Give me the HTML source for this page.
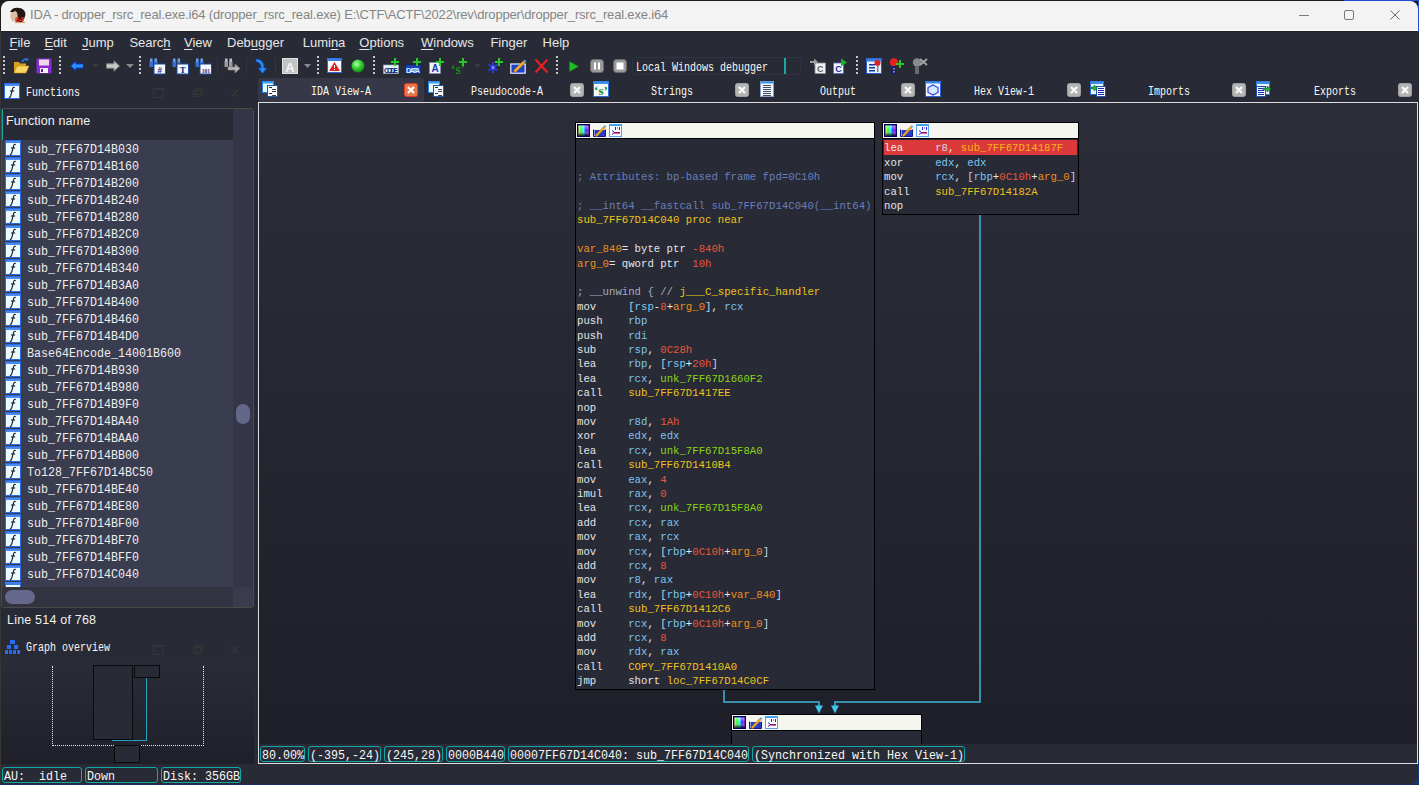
<!DOCTYPE html><html><head><meta charset="utf-8"><title>IDA</title><style>
*{margin:0;padding:0;box-sizing:border-box}
html,body{width:1419px;height:785px;overflow:hidden;background:#1c1c1f;font-family:"Liberation Sans",sans-serif}
.a{position:absolute}
svg.a{display:block;overflow:visible}
.m{font-family:"Liberation Mono",monospace;white-space:pre}
.s{font-family:"Liberation Sans",sans-serif;white-space:pre}
.sx{display:inline-block;transform-origin:0 0}
</style></head><body>
<div class="a" style="left:0px;top:0px;width:1419px;height:785px;background:#1c1c1f;"></div>
<div class="a" style="left:1344px;top:0px;width:75px;height:1px;background:#1d4ed8;"></div>
<div class="a" style="left:1418px;top:0px;width:1px;height:785px;background:#24262c;"></div>
<div class="a" style="left:1418px;top:0px;width:1px;height:32px;background:#1f4fd0;"></div>
<div class="a" style="left:1405px;top:760px;width:14px;height:25px;background:#1a3580;"></div>
<div class="a" style="left:0px;top:784px;width:1419px;height:1px;background:#1e2c60;"></div>
<div class="a" style="left:1px;top:1px;width:1417px;height:783px;background:#282a36;border-radius:8px 8px 7px 0"></div>
<div class="a" style="left:1px;top:1px;width:1417px;height:29px;background:#f3f3f3;border-radius:8px 8px 0 0"></div>
<div class="a" style="left:1px;top:30px;width:1417px;height:1px;background:#fbfbfb;"></div>
<div class="a" style="left:1px;top:31px;width:1417px;height:1px;background:#1f2029;"></div>
<div class="a" style="left:0px;top:31px;width:1px;height:753px;background:#363634;"></div>
<svg class="a" style="left:9px;top:7px;" width="17" height="16" viewBox="0 0 17 16">
<path d="M2 4c1-3 5-4 8-3 3 0 5 2 6 4 1 2 0 5-1 7l-2 3H7z" fill="#241812"/>
<ellipse cx="5" cy="9" rx="3.6" ry="5.6" fill="#dcc0a8"/>
<path d="M1 5c1-2 3-3 5-2l-1 2z" fill="#241812"/>
<path d="M6 15.5h10" stroke="#d8a070" stroke-width="1.2"/>
<text x="6" y="15" font-size="8" font-family="Liberation Sans" font-weight="bold" fill="#e83a20">64</text>
</svg>
<div class="a s" style="left:30px;top:8px;font-size:13px;line-height:1;color:#858585;letter-spacing:-0.17px">IDA - dropper_rsrc_real.exe.i64 (dropper_rsrc_real.exe) E:\CTF\ACTF\2022\rev\dropper\dropper_rsrc_real.exe.i64</div>
<div class="a" style="left:1299px;top:15px;width:10px;height:1px;background:#7a7a7a;"></div>
<div class="a" style="left:1344px;top:10px;width:10px;height:10px;border:1px solid #7a7a7a;border-radius:2px"></div>
<svg class="a" style="left:1390px;top:10px;" width="10" height="10" viewBox="0 0 10 10"><path d="M0.5 0.5L9.5 9.5M9.5 0.5L0.5 9.5" stroke="#6a6a6a" stroke-width="1"/></svg>
<div class="a s" id="mn_File" style="left:9.5px;top:36px;font-size:13px;line-height:13px;color:#e6e6e6"><u style="text-decoration:underline;text-underline-offset:1.5px;text-decoration-thickness:1px">F</u>ile</div>
<div class="a s" id="mn_Edit" style="left:44.4px;top:36px;font-size:13px;line-height:13px;color:#e6e6e6"><u style="text-decoration:underline;text-underline-offset:1.5px;text-decoration-thickness:1px">E</u>dit</div>
<div class="a s" id="mn_Jump" style="left:82px;top:36px;font-size:13px;line-height:13px;color:#e6e6e6"><u style="text-decoration:underline;text-underline-offset:1.5px;text-decoration-thickness:1px">J</u>ump</div>
<div class="a s" id="mn_Search" style="left:129.4px;top:36px;font-size:13px;line-height:13px;color:#e6e6e6">Searc<u style="text-decoration:underline;text-underline-offset:1.5px;text-decoration-thickness:1px">h</u></div>
<div class="a s" id="mn_View" style="left:184px;top:36px;font-size:13px;line-height:13px;color:#e6e6e6"><u style="text-decoration:underline;text-underline-offset:1.5px;text-decoration-thickness:1px">V</u>iew</div>
<div class="a s" id="mn_Debugger" style="left:227px;top:36px;font-size:13px;line-height:13px;color:#e6e6e6">Deb<u style="text-decoration:underline;text-underline-offset:1.5px;text-decoration-thickness:1px">u</u>gger</div>
<div class="a s" id="mn_Lumina" style="left:302.7px;top:36px;font-size:13px;line-height:13px;color:#e6e6e6">Lumi<u style="text-decoration:underline;text-underline-offset:1.5px;text-decoration-thickness:1px">n</u>a</div>
<div class="a s" id="mn_Options" style="left:359.3px;top:36px;font-size:13px;line-height:13px;color:#e6e6e6"><u style="text-decoration:underline;text-underline-offset:1.5px;text-decoration-thickness:1px">O</u>ptions</div>
<div class="a s" id="mn_Windows" style="left:421px;top:36px;font-size:13px;line-height:13px;color:#e6e6e6"><u style="text-decoration:underline;text-underline-offset:1.5px;text-decoration-thickness:1px">W</u>indows</div>
<div class="a s" id="mn_Finger" style="left:490.4px;top:36px;font-size:13px;line-height:13px;color:#e6e6e6">Finger</div>
<div class="a s" id="mn_Help" style="left:542.6px;top:36px;font-size:13px;line-height:13px;color:#e6e6e6">Help</div>
<div class="a" style="left:3px;top:56px;width:2px;height:2px;background:#c8c8c8;"></div>
<div class="a" style="left:3px;top:60px;width:2px;height:2px;background:#c8c8c8;"></div>
<div class="a" style="left:3px;top:64px;width:2px;height:2px;background:#c8c8c8;"></div>
<div class="a" style="left:3px;top:68px;width:2px;height:2px;background:#c8c8c8;"></div>
<div class="a" style="left:3px;top:72px;width:2px;height:2px;background:#c8c8c8;"></div>
<div class="a" style="left:59px;top:56px;width:2px;height:2px;background:#c8c8c8;"></div>
<div class="a" style="left:59px;top:60px;width:2px;height:2px;background:#c8c8c8;"></div>
<div class="a" style="left:59px;top:64px;width:2px;height:2px;background:#c8c8c8;"></div>
<div class="a" style="left:59px;top:68px;width:2px;height:2px;background:#c8c8c8;"></div>
<div class="a" style="left:59px;top:72px;width:2px;height:2px;background:#c8c8c8;"></div>
<div class="a" style="left:139px;top:56px;width:2px;height:2px;background:#c8c8c8;"></div>
<div class="a" style="left:139px;top:60px;width:2px;height:2px;background:#c8c8c8;"></div>
<div class="a" style="left:139px;top:64px;width:2px;height:2px;background:#c8c8c8;"></div>
<div class="a" style="left:139px;top:68px;width:2px;height:2px;background:#c8c8c8;"></div>
<div class="a" style="left:139px;top:72px;width:2px;height:2px;background:#c8c8c8;"></div>
<div class="a" style="left:317px;top:56px;width:2px;height:2px;background:#c8c8c8;"></div>
<div class="a" style="left:317px;top:60px;width:2px;height:2px;background:#c8c8c8;"></div>
<div class="a" style="left:317px;top:64px;width:2px;height:2px;background:#c8c8c8;"></div>
<div class="a" style="left:317px;top:68px;width:2px;height:2px;background:#c8c8c8;"></div>
<div class="a" style="left:317px;top:72px;width:2px;height:2px;background:#c8c8c8;"></div>
<div class="a" style="left:373px;top:56px;width:2px;height:2px;background:#c8c8c8;"></div>
<div class="a" style="left:373px;top:60px;width:2px;height:2px;background:#c8c8c8;"></div>
<div class="a" style="left:373px;top:64px;width:2px;height:2px;background:#c8c8c8;"></div>
<div class="a" style="left:373px;top:68px;width:2px;height:2px;background:#c8c8c8;"></div>
<div class="a" style="left:373px;top:72px;width:2px;height:2px;background:#c8c8c8;"></div>
<div class="a" style="left:556px;top:56px;width:2px;height:2px;background:#c8c8c8;"></div>
<div class="a" style="left:556px;top:60px;width:2px;height:2px;background:#c8c8c8;"></div>
<div class="a" style="left:556px;top:64px;width:2px;height:2px;background:#c8c8c8;"></div>
<div class="a" style="left:556px;top:68px;width:2px;height:2px;background:#c8c8c8;"></div>
<div class="a" style="left:556px;top:72px;width:2px;height:2px;background:#c8c8c8;"></div>
<div class="a" style="left:856px;top:56px;width:2px;height:2px;background:#c8c8c8;"></div>
<div class="a" style="left:856px;top:60px;width:2px;height:2px;background:#c8c8c8;"></div>
<div class="a" style="left:856px;top:64px;width:2px;height:2px;background:#c8c8c8;"></div>
<div class="a" style="left:856px;top:68px;width:2px;height:2px;background:#c8c8c8;"></div>
<div class="a" style="left:856px;top:72px;width:2px;height:2px;background:#c8c8c8;"></div>
<div class="a" style="left:217px;top:57px;width:1px;height:17px;background:#34363f;"></div>
<div class="a" style="left:246px;top:57px;width:1px;height:17px;background:#34363f;"></div>
<div class="a" style="left:275px;top:57px;width:1px;height:17px;background:#34363f;"></div>
<svg class="a" style="left:13px;top:58px;" width="17" height="16" viewBox="0 0 17 16">
<path d="M1 4h5l1 1.5h6v9H1z" fill="#d8a020"/>
<path d="M1 15l3-7h12l-3 7z" fill="#f8d860" stroke="#c89010" stroke-width="0.6"/>
<path d="M9 4c1-2.5 3-3 5-3" stroke="#2a7ae0" stroke-width="1.6" fill="none"/>
<path d="M13 0l3 1.5-2.5 2z" fill="#2a7ae0"/>
</svg>
<svg class="a" style="left:36px;top:58px;" width="16" height="16" viewBox="0 0 16 16">
<rect x="0.5" y="0.5" width="15" height="15" fill="#8a2ad8" rx="1"/>
<rect x="3" y="1.5" width="10" height="6" fill="#f0d8e8"/>
<rect x="4" y="10" width="8" height="5" fill="#f4f4f4"/>
<rect x="5" y="11" width="2" height="3" fill="#6a1ab0"/>
</svg>
<svg class="a" style="left:70px;top:60px;" width="14" height="12" viewBox="0 0 14 12"><path d="M0.5 6L6 0.8V3.8H13.5V8.2H6V11.2Z" fill="#2a8cff" stroke="#0a2aa0" stroke-width="1"/></svg>
<svg class="a" style="left:92px;top:64px;" width="7" height="4" viewBox="0 0 7 4"><path d="M0 0h7l-3.5 4z" fill="#3a3a3a"/></svg>
<svg class="a" style="left:106px;top:60px;" width="14" height="12" viewBox="0 0 14 12"><path d="M13.5 6L8 0.8V3.8H0.5V8.2H8V11.2Z" fill="#c8c8c8" stroke="#808080" stroke-width="1"/></svg>
<svg class="a" style="left:126px;top:64px;" width="8" height="4" viewBox="0 0 8 4"><path d="M0 0h8l-4 4z" fill="#8a8a8a"/></svg>
<svg class="a" style="left:149px;top:58px;" width="17" height="16" viewBox="0 0 17 16">
<rect x="0.5" y="3" width="3.5" height="6" fill="#3a70d0"/><rect x="5" y="3" width="3.5" height="6" fill="#3a70d0"/>
<rect x="1" y="0.5" width="2.5" height="3" fill="#6aa0f0"/><rect x="5.5" y="0.5" width="2.5" height="3" fill="#6aa0f0"/>
<rect x="5" y="6" width="11.5" height="10" fill="#f4f8ff" stroke="#1a4aa0" stroke-width="1"/>
<text x="10.8" y="14.5" font-size="9" text-anchor="middle" font-family="Liberation Serif" font-weight="bold" fill="#0a2a80">#</text>
</svg>
<svg class="a" style="left:172px;top:58px;" width="17" height="16" viewBox="0 0 17 16">
<rect x="0.5" y="3" width="3.5" height="6" fill="#3a70d0"/><rect x="5" y="3" width="3.5" height="6" fill="#3a70d0"/>
<rect x="1" y="0.5" width="2.5" height="3" fill="#6aa0f0"/><rect x="5.5" y="0.5" width="2.5" height="3" fill="#6aa0f0"/>
<rect x="5" y="6" width="11.5" height="10" fill="#f4f8ff" stroke="#1a4aa0" stroke-width="1"/>
<text x="10.8" y="14.5" font-size="9" text-anchor="middle" font-family="Liberation Serif" font-weight="bold" fill="#0a2a80">T</text>
</svg>
<svg class="a" style="left:195px;top:58px;" width="17" height="16" viewBox="0 0 17 16">
<rect x="0.5" y="3" width="3.5" height="6" fill="#3a70d0"/><rect x="5" y="3" width="3.5" height="6" fill="#3a70d0"/>
<rect x="1" y="0.5" width="2.5" height="3" fill="#6aa0f0"/><rect x="5.5" y="0.5" width="2.5" height="3" fill="#6aa0f0"/>
<rect x="5" y="6" width="11.5" height="10" fill="#f4f8ff" stroke="#1a4aa0" stroke-width="1"/>
<text x="10.8" y="14.5" font-size="5.5" text-anchor="middle" font-family="Liberation Serif" font-weight="bold" fill="#0a2a80">101</text>
</svg>
<svg class="a" style="left:224px;top:58px;" width="17" height="16" viewBox="0 0 17 16">
<rect x="0.5" y="3" width="3.5" height="6" fill="#9a9a9a"/><rect x="5" y="3" width="3.5" height="6" fill="#9a9a9a"/>
<rect x="1" y="0.5" width="2.5" height="3" fill="#c0c0c0"/><rect x="5.5" y="0.5" width="2.5" height="3" fill="#c0c0c0"/>
<path d="M4 9h7V6l5 4.5-5 4.5V12H4z" fill="#b8b8b8" stroke="#808080" stroke-width="0.7"/>
</svg>
<svg class="a" style="left:255px;top:58px;" width="13" height="16" viewBox="0 0 13 16"><path d="M1 1c5 0 8 3 8 8v1h3l-4.5 5.5L3 10h3V9c0-3-2-5-5-5z" fill="#2a90f0" stroke="#1040b0" stroke-width="0.8"/></svg>
<svg class="a" style="left:282px;top:58px;" width="16" height="16" viewBox="0 0 16 16"><rect x="0.5" y="0.5" width="15" height="15" fill="#c4c4c4" stroke="#e0e0e0"/><text x="8" y="13.5" font-size="13" text-anchor="middle" font-family="Liberation Sans" font-weight="bold" fill="#f4f4f4">A</text></svg>
<svg class="a" style="left:304px;top:64px;" width="7" height="4" viewBox="0 0 7 4"><path d="M0 0h7l-3.5 4z" fill="#8a8a8a"/></svg>
<svg class="a" style="left:327px;top:58px;" width="15" height="15" viewBox="0 0 15 15"><rect x="0.5" y="0.5" width="14" height="14" fill="#f8fcff" stroke="#2a6ad8"/><rect x="0.5" y="0.5" width="14" height="2.5" fill="#3a80e8"/><path d="M7.5 4L13 13H2z" fill="#e02020"/><rect x="7" y="7" width="1" height="3" fill="#fff"/><rect x="7" y="11" width="1" height="1" fill="#fff"/></svg>
<svg class="a" style="left:351px;top:59px;" width="14" height="14" viewBox="0 0 14 14"><defs><radialGradient id="gg" cx="0.4" cy="0.35" r="0.7"><stop offset="0" stop-color="#b8ffb0"/><stop offset="0.5" stop-color="#30d030"/><stop offset="1" stop-color="#108010"/></radialGradient></defs><circle cx="7" cy="7" r="6.5" fill="url(#gg)"/></svg>
<svg class="a" style="left:383px;top:62px;" width="16" height="12" viewBox="0 0 16 12"><rect x="0.5" y="3" width="15" height="8.5" fill="#e8f0f8" stroke="#a0b0c0" stroke-width="0.6"/><text x="8" y="10.5" font-size="7" text-anchor="middle" font-family="Liberation Sans" font-weight="bold" fill="#0a2a80" textLength="14">CODE</text></svg>
<div class="a" style="left:394px;top:58px;width:2px;height:8px;background:#28c828;"></div>
<div class="a" style="left:391px;top:61px;width:8px;height:2px;background:#28c828;"></div>
<svg class="a" style="left:405px;top:62px;" width="16" height="12" viewBox="0 0 16 12"><rect x="0.5" y="3" width="15" height="8.5" fill="#1a40c0" stroke="#0a2080" stroke-width="0.6"/><text x="8" y="10.5" font-size="7" text-anchor="middle" font-family="Liberation Sans" font-weight="bold" fill="#e0f0ff" textLength="14">DATA</text></svg>
<div class="a" style="left:416px;top:58px;width:2px;height:8px;background:#28c828;"></div>
<div class="a" style="left:413px;top:61px;width:8px;height:2px;background:#28c828;"></div>
<svg class="a" style="left:429px;top:62px;" width="12" height="12" viewBox="0 0 12 12"><rect x="0.5" y="0.5" width="11" height="11" fill="#f0f4fc" stroke="#8090c0" stroke-width="0.6"/><text x="6" y="10" font-size="10" text-anchor="middle" font-family="Liberation Sans" font-weight="bold" fill="#1a40b0">A</text></svg>
<div class="a" style="left:439px;top:58px;width:2px;height:8px;background:#28c828;"></div>
<div class="a" style="left:436px;top:61px;width:8px;height:2px;background:#28c828;"></div>
<svg class="a" style="left:451px;top:62px;" width="15" height="12" viewBox="0 0 15 12"><text x="0" y="11.5" font-size="14" font-family="Liberation Serif" font-weight="bold" fill="#1a8a1a" textLength="14" lengthAdjust="spacingAndGlyphs">&#8216;s&#8217;</text></svg>
<div class="a" style="left:462px;top:58px;width:2px;height:8px;background:#28c828;"></div>
<div class="a" style="left:459px;top:61px;width:8px;height:2px;background:#28c828;"></div>
<svg class="a" style="left:474px;top:64px;" width="7" height="4" viewBox="0 0 7 4"><path d="M0 0h7l-3.5 4z" fill="#3a3a3a"/></svg>
<svg class="a" style="left:487px;top:60px;" width="14" height="14" viewBox="0 0 14 14"><path d="M6 2V13M1.5 4.5L10.5 10.5M10.5 4.5L1.5 10.5" stroke="#2a3ae8" stroke-width="2"/><circle cx="6" cy="7.5" r="1.5" fill="#8090ff"/></svg>
<div class="a" style="left:498px;top:58px;width:2px;height:8px;background:#28c828;"></div>
<div class="a" style="left:495px;top:61px;width:8px;height:2px;background:#28c828;"></div>
<svg class="a" style="left:510px;top:58px;" width="16" height="16" viewBox="0 0 16 16"><rect x="0.8" y="6" width="14.4" height="9.2" fill="#2040d0" stroke="#e8f0ff" stroke-width="1.2"/><path d="M4 12L13 3l2 2-9 9H4z" fill="#f0b020" stroke="#a06010" stroke-width="0.5"/><path d="M13 3l1.5-1.5 2 2L15 5z" fill="#60a0e0"/></svg>
<svg class="a" style="left:534px;top:58px;" width="15" height="16" viewBox="0 0 15 16"><path d="M1.5 1.5L13.5 14.5M13.5 1.5L1.5 14.5" stroke="#e82020" stroke-width="2.2"/></svg>
<svg class="a" style="left:569px;top:61px;" width="10" height="11" viewBox="0 0 10 11"><path d="M0.5 0.5L9.5 5.5L0.5 10.5z" fill="#20c020" stroke="#108010" stroke-width="0.6"/></svg>
<svg class="a" style="left:590px;top:59px;" width="14" height="14" viewBox="0 0 14 14"><rect x="0.5" y="0.5" width="13" height="13" rx="3" fill="#9a9a9a" stroke="#6a6a6a"/><rect x="4" y="3.5" width="2" height="7" fill="#fff"/><rect x="8" y="3.5" width="2" height="7" fill="#fff"/></svg>
<svg class="a" style="left:613px;top:59px;" width="14" height="14" viewBox="0 0 14 14"><rect x="0.5" y="0.5" width="13" height="13" rx="3" fill="#9a9a9a" stroke="#6a6a6a"/><rect x="3.5" y="3.5" width="7" height="7" fill="#fff"/></svg>
<div class="a" style="left:632px;top:57px;width:169px;height:18px;border:1px solid #31333f;border-radius:3px;background:#282a36"></div>
<div class="a m" style="left:636px;top:62px;font-size:12.5px;line-height:1;color:#f8f8f4;"><span class="sx" style="transform:scaleX(0.8000)">Local Windows debugger</span></div>
<div class="a" style="left:784px;top:58px;width:2px;height:16px;background:#18a8a8;"></div>
<svg class="a" style="left:810px;top:58px;" width="16" height="16" viewBox="0 0 16 16"><rect x="5" y="5" width="10.5" height="10.5" fill="#f0f0f0" stroke="#909090" stroke-width="0.8"/><text x="10.3" y="14" font-size="9" text-anchor="middle" font-family="Liberation Sans" font-weight="bold" fill="#606060">C</text><path d="M0 3h4V0.5l4 3.5-4 3.5V5H0z" fill="#a0a0a0"/></svg>
<svg class="a" style="left:833px;top:58px;" width="15" height="16" viewBox="0 0 15 16"><rect x="0.5" y="5" width="10" height="10.5" fill="#f0f4ff" stroke="#5070c0" stroke-width="0.8"/><text x="5.5" y="14" font-size="9" text-anchor="middle" font-family="Liberation Sans" font-weight="bold" fill="#1a2a90">C</text><path d="M8 0.5l6 4-6 4z" fill="#20b020"/></svg>
<svg class="a" style="left:866px;top:58px;" width="16" height="16" viewBox="0 0 16 16"><rect x="0.5" y="0.5" width="15" height="15" fill="#e8f0ff" stroke="#2a5ad0"/><rect x="0.5" y="0.5" width="15" height="3" fill="#3a7ae0"/><rect x="3" y="6" width="6" height="1.5" fill="#1a3a9a"/><rect x="3" y="9" width="6" height="1.5" fill="#1a3a9a"/><rect x="3" y="12" width="6" height="1.5" fill="#1a3a9a"/><circle cx="11.5" cy="5" r="3" fill="#e02020"/><rect x="11" y="7" width="1.5" height="7" fill="#808080"/></svg>
<svg class="a" style="left:889px;top:58px;" width="16" height="16" viewBox="0 0 16 16"><circle cx="5" cy="4.5" r="4.2" fill="#e82020"/><rect x="3" y="8" width="4" height="8" fill="#1a1a80"/><rect x="4.2" y="10" width="1.6" height="1.6" fill="#a0a0a0"/><rect x="4.2" y="13" width="1.6" height="1.6" fill="#a0a0a0"/></svg>
<div class="a" style="left:899px;top:60px;width:2px;height:8px;background:#28c828;"></div>
<div class="a" style="left:896px;top:63px;width:8px;height:2px;background:#28c828;"></div>
<svg class="a" style="left:912px;top:58px;" width="17" height="16" viewBox="0 0 17 16"><circle cx="5" cy="4.5" r="4.2" fill="#8a8a8a"/><rect x="3" y="8" width="4" height="8" fill="#6a6a6a"/><path d="M8 1l7 6M15 1L8 7" stroke="#a8a8a8" stroke-width="1.8"/></svg>
<div class="a" style="left:258px;top:78px;width:166px;height:24px;background:#363848;border-radius:3px 3px 0 0"></div>
<svg class="a" style="left:262px;top:81px;" width="16" height="16" viewBox="0 0 16 16">
<rect x="0.5" y="0.5" width="11" height="11" fill="#e8faff" stroke="#2a80e8"/><rect x="0.5" y="0.5" width="11" height="2" fill="#3aa0f0"/>
<rect x="5.5" y="4.5" width="10" height="11" fill="#f4f8ff" stroke="#1a5aa8"/>
<rect x="7" y="6" width="3" height="1" fill="#303030"/><rect x="10" y="8" width="4" height="1" fill="#404040"/><rect x="10" y="10" width="4" height="1" fill="#404040"/><rect x="7" y="12" width="3" height="1" fill="#303030"/><rect x="10" y="14" width="4" height="1" fill="#404040"/></svg>
<svg class="a" style="left:404px;top:83px;" width="14" height="14" viewBox="0 0 14 14"><rect x="0.5" y="0.5" width="13" height="13" rx="2" fill="#e4784a" stroke="#e43c20" stroke-width="1"/><path d="M4 4L10 10M10 4L4 10" stroke="#fff" stroke-width="2.2"/></svg>
<div class="a m" style="left:310.8px;top:86px;font-size:12.5px;line-height:1;color:#f8f8f4;"><span class="sx" style="transform:scaleX(0.8000)">IDA View-A</span></div>
<svg class="a" style="left:428px;top:81px;" width="16" height="16" viewBox="0 0 16 16">
<rect x="0.5" y="0.5" width="11" height="11" fill="#e8faff" stroke="#2a80e8"/><rect x="0.5" y="0.5" width="11" height="2" fill="#3aa0f0"/>
<rect x="5.5" y="4.5" width="10" height="11" fill="#f4f8ff" stroke="#1a5aa8"/>
<rect x="7" y="6" width="3" height="1" fill="#303030"/><rect x="10" y="8" width="4" height="1" fill="#404040"/><rect x="10" y="10" width="4" height="1" fill="#404040"/><rect x="7" y="12" width="3" height="1" fill="#303030"/><rect x="10" y="14" width="4" height="1" fill="#404040"/></svg>
<svg class="a" style="left:570px;top:83px;" width="14" height="14" viewBox="0 0 14 14"><rect x="0.5" y="0.5" width="13" height="13" rx="2" fill="#b4b4b4" stroke="#a0a0a0" stroke-width="1"/><path d="M4 4L10 10M10 4L4 10" stroke="#fafafa" stroke-width="2.2"/></svg>
<div class="a m" style="left:470.5px;top:86px;font-size:12.5px;line-height:1;color:#f8f8f4;"><span class="sx" style="transform:scaleX(0.8000)">Pseudocode-A</span></div>
<svg class="a" style="left:593px;top:81px;" width="16" height="16" viewBox="0 0 16 16"><rect x="0.5" y="0.5" width="15" height="15" fill="#f4fcff" stroke="#2a70d8"/><rect x="0.5" y="0.5" width="15" height="2.5" fill="#3a90e8"/><text x="8" y="13.5" font-size="13" text-anchor="middle" font-family="Liberation Serif" font-weight="bold" fill="#1a8a1a" textLength="14" lengthAdjust="spacingAndGlyphs">&#8216;s&#8217;</text></svg>
<svg class="a" style="left:735px;top:83px;" width="14" height="14" viewBox="0 0 14 14"><rect x="0.5" y="0.5" width="13" height="13" rx="2" fill="#b4b4b4" stroke="#a0a0a0" stroke-width="1"/><path d="M4 4L10 10M10 4L4 10" stroke="#fafafa" stroke-width="2.2"/></svg>
<div class="a m" style="left:651.2px;top:86px;font-size:12.5px;line-height:1;color:#f8f8f4;"><span class="sx" style="transform:scaleX(0.8000)">Strings</span></div>
<svg class="a" style="left:759px;top:81px;" width="16" height="16" viewBox="0 0 16 16"><rect x="1.5" y="0.5" width="13" height="15" fill="#f4f8ff" stroke="#8aa0c8"/><rect x="1.5" y="0.5" width="13" height="2" fill="#3a90e8"/><rect x="4" y="4" width="8" height="1" fill="#404a60"/><rect x="4" y="6" width="8" height="1" fill="#404a60"/><rect x="4" y="8" width="8" height="1" fill="#404a60"/><rect x="4" y="10" width="8" height="1" fill="#404a60"/><rect x="4" y="12" width="8" height="1" fill="#404a60"/><rect x="4" y="14" width="8" height="1" fill="#404a60"/></svg>
<svg class="a" style="left:901px;top:83px;" width="14" height="14" viewBox="0 0 14 14"><rect x="0.5" y="0.5" width="13" height="13" rx="2" fill="#b4b4b4" stroke="#a0a0a0" stroke-width="1"/><path d="M4 4L10 10M10 4L4 10" stroke="#fafafa" stroke-width="2.2"/></svg>
<div class="a m" style="left:819.8px;top:86px;font-size:12.5px;line-height:1;color:#f8f8f4;"><span class="sx" style="transform:scaleX(0.8000)">Output</span></div>
<svg class="a" style="left:925px;top:81px;" width="16" height="16" viewBox="0 0 16 16"><rect x="0.5" y="0.5" width="15" height="15" fill="#f0f4ff" stroke="#2a60d8"/><rect x="0.5" y="0.5" width="15" height="2" fill="#3a90e8"/><path d="M8 4l5 2.5v5L8 14l-5-2.5v-5z" fill="#d8e8ff" stroke="#2a40e0" stroke-width="1.2"/></svg>
<svg class="a" style="left:1067px;top:83px;" width="14" height="14" viewBox="0 0 14 14"><rect x="0.5" y="0.5" width="13" height="13" rx="2" fill="#b4b4b4" stroke="#a0a0a0" stroke-width="1"/><path d="M4 4L10 10M10 4L4 10" stroke="#fafafa" stroke-width="2.2"/></svg>
<div class="a m" style="left:973.5px;top:86px;font-size:12.5px;line-height:1;color:#f8f8f4;"><span class="sx" style="transform:scaleX(0.8000)">Hex View-1</span></div>
<svg class="a" style="left:1090px;top:81px;" width="16" height="16" viewBox="0 0 16 16"><rect x="0.5" y="0.5" width="13" height="13" fill="#e8f4ff" stroke="#2a70d8"/><rect x="0.5" y="0.5" width="13" height="2.5" fill="#3a90e8"/><rect x="6.5" y="5.5" width="9" height="10" fill="#f4f8ff" stroke="#1a50b0"/><rect x="8" y="7" width="6" height="1" fill="#1a2ab0"/><rect x="8" y="9" width="6" height="1" fill="#1a2ab0"/><rect x="8" y="11" width="6" height="1" fill="#1a2ab0"/><rect x="8" y="13" width="6" height="1" fill="#1a2ab0"/><path d="M1 6h3V4l3.5 3L4 10V8H1z" fill="#20b040" stroke="#106020" stroke-width="0.5"/></svg>
<svg class="a" style="left:1232px;top:83px;" width="14" height="14" viewBox="0 0 14 14"><rect x="0.5" y="0.5" width="13" height="13" rx="2" fill="#b4b4b4" stroke="#a0a0a0" stroke-width="1"/><path d="M4 4L10 10M10 4L4 10" stroke="#fafafa" stroke-width="2.2"/></svg>
<div class="a m" style="left:1148.2px;top:86px;font-size:12.5px;line-height:1;color:#f8f8f4;"><span class="sx" style="transform:scaleX(0.8000)">Imports</span></div>
<svg class="a" style="left:1256px;top:81px;" width="16" height="16" viewBox="0 0 16 16"><rect x="0.5" y="0.5" width="13" height="13" fill="#e8f4ff" stroke="#2a70d8"/><rect x="0.5" y="0.5" width="13" height="2.5" fill="#3a90e8"/><rect x="0.5" y="5.5" width="9" height="10" fill="#f4f8ff" stroke="#1a50b0"/><rect x="2" y="7" width="6" height="1" fill="#1a2ab0"/><rect x="2" y="9" width="6" height="1" fill="#1a2ab0"/><rect x="2" y="11" width="6" height="1" fill="#1a2ab0"/><rect x="2" y="13" width="6" height="1" fill="#1a2ab0"/><path d="M7 7h4V5l4 3-4 3V9H7z" fill="#20b040" stroke="#106020" stroke-width="0.5"/></svg>
<svg class="a" style="left:1398px;top:83px;" width="14" height="14" viewBox="0 0 14 14"><rect x="0.5" y="0.5" width="13" height="13" rx="2" fill="#b4b4b4" stroke="#a0a0a0" stroke-width="1"/><path d="M4 4L10 10M10 4L4 10" stroke="#fafafa" stroke-width="2.2"/></svg>
<div class="a m" style="left:1313.9px;top:86px;font-size:12.5px;line-height:1;color:#f8f8f4;"><span class="sx" style="transform:scaleX(0.8000)">Exports</span></div>
<svg class="a" style="left:4px;top:83px;" width="16" height="16" viewBox="0 0 16 16"><rect x="0.5" y="0.5" width="15" height="15" fill="#eafaff" stroke="#2a6ae0"/><rect x="1" y="1" width="14" height="2" fill="#4a8af4"/><path d="M10.8 4.6c-0.6-0.5-1.6-0.4-2 0.6L6.6 13.4c-0.3 0.9-1 1.1-1.7 0.8" fill="none" stroke="#141414" stroke-width="1.1"/><path d="M6 8h4.2" stroke="#141414" stroke-width="1"/></svg>
<div class="a m" style="left:26px;top:87px;font-size:12.5px;line-height:1;color:#f8f8f4;"><span class="sx" style="transform:scaleX(0.8000)">Functions</span></div>
<div class="a" style="left:153px;top:88px;width:11px;height:10px;border:1px solid #353536;border-top-width:2px"></div>
<div class="a" style="left:193px;top:90px;width:8px;height:7px;border:1px solid #353536"></div>
<div class="a" style="left:195px;top:88px;width:8px;height:7px;border:1px solid #353536"></div>
<svg class="a" style="left:230px;top:88px;" width="10" height="10" viewBox="0 0 10 10"><path d="M1 1L9 9M9 1L1 9" stroke="#353536" stroke-width="1.5"/></svg>
<div class="a" style="left:1px;top:108px;width:253px;height:500px;border:1px solid #4a4a48;border-radius:3px;background:#282a36"></div>
<div class="a" style="left:2px;top:140px;width:231px;height:447px;background:#3a3c4f;"></div>
<div class="a" style="left:233px;top:109px;width:20px;height:478px;background:#343647;"></div>
<div class="a" style="left:2px;top:587px;width:231px;height:20px;background:#313340;"></div>
<div class="a" style="left:233px;top:587px;width:20px;height:20px;background:#3a3c4e;"></div>
<div class="a" style="left:2px;top:109px;width:1px;height:31px;background:#16a8a0;"></div>
<div class="a s" style="left:6px;top:115px;font-size:12.5px;line-height:13px;color:#f0f0f0;letter-spacing:0.12px">Function name</div>
<svg class="a" style="left:5px;top:140px;" width="16" height="16" viewBox="0 0 16 16"><rect x="0.5" y="0.5" width="15" height="15" fill="#eafaff" stroke="#2a6ae0"/><rect x="1" y="1" width="14" height="2" fill="#4a8af4"/><path d="M10.8 4.6c-0.6-0.5-1.6-0.4-2 0.6L6.6 13.4c-0.3 0.9-1 1.1-1.7 0.8" fill="none" stroke="#141414" stroke-width="1.1"/><path d="M6 8h4.2" stroke="#141414" stroke-width="1"/></svg>
<div class="a m" style="left:27px;top:144px;font-size:12.5px;line-height:1;color:#eeeeee;"><span class="sx" style="transform:scaleX(0.9333)">sub_7FF67D14B030</span></div>
<svg class="a" style="left:5px;top:157px;" width="16" height="16" viewBox="0 0 16 16"><rect x="0.5" y="0.5" width="15" height="15" fill="#eafaff" stroke="#2a6ae0"/><rect x="1" y="1" width="14" height="2" fill="#4a8af4"/><path d="M10.8 4.6c-0.6-0.5-1.6-0.4-2 0.6L6.6 13.4c-0.3 0.9-1 1.1-1.7 0.8" fill="none" stroke="#141414" stroke-width="1.1"/><path d="M6 8h4.2" stroke="#141414" stroke-width="1"/></svg>
<div class="a m" style="left:27px;top:161px;font-size:12.5px;line-height:1;color:#eeeeee;"><span class="sx" style="transform:scaleX(0.9333)">sub_7FF67D14B160</span></div>
<svg class="a" style="left:5px;top:174px;" width="16" height="16" viewBox="0 0 16 16"><rect x="0.5" y="0.5" width="15" height="15" fill="#eafaff" stroke="#2a6ae0"/><rect x="1" y="1" width="14" height="2" fill="#4a8af4"/><path d="M10.8 4.6c-0.6-0.5-1.6-0.4-2 0.6L6.6 13.4c-0.3 0.9-1 1.1-1.7 0.8" fill="none" stroke="#141414" stroke-width="1.1"/><path d="M6 8h4.2" stroke="#141414" stroke-width="1"/></svg>
<div class="a m" style="left:27px;top:178px;font-size:12.5px;line-height:1;color:#eeeeee;"><span class="sx" style="transform:scaleX(0.9333)">sub_7FF67D14B200</span></div>
<svg class="a" style="left:5px;top:191px;" width="16" height="16" viewBox="0 0 16 16"><rect x="0.5" y="0.5" width="15" height="15" fill="#eafaff" stroke="#2a6ae0"/><rect x="1" y="1" width="14" height="2" fill="#4a8af4"/><path d="M10.8 4.6c-0.6-0.5-1.6-0.4-2 0.6L6.6 13.4c-0.3 0.9-1 1.1-1.7 0.8" fill="none" stroke="#141414" stroke-width="1.1"/><path d="M6 8h4.2" stroke="#141414" stroke-width="1"/></svg>
<div class="a m" style="left:27px;top:195px;font-size:12.5px;line-height:1;color:#eeeeee;"><span class="sx" style="transform:scaleX(0.9333)">sub_7FF67D14B240</span></div>
<svg class="a" style="left:5px;top:208px;" width="16" height="16" viewBox="0 0 16 16"><rect x="0.5" y="0.5" width="15" height="15" fill="#eafaff" stroke="#2a6ae0"/><rect x="1" y="1" width="14" height="2" fill="#4a8af4"/><path d="M10.8 4.6c-0.6-0.5-1.6-0.4-2 0.6L6.6 13.4c-0.3 0.9-1 1.1-1.7 0.8" fill="none" stroke="#141414" stroke-width="1.1"/><path d="M6 8h4.2" stroke="#141414" stroke-width="1"/></svg>
<div class="a m" style="left:27px;top:212px;font-size:12.5px;line-height:1;color:#eeeeee;"><span class="sx" style="transform:scaleX(0.9333)">sub_7FF67D14B280</span></div>
<svg class="a" style="left:5px;top:225px;" width="16" height="16" viewBox="0 0 16 16"><rect x="0.5" y="0.5" width="15" height="15" fill="#eafaff" stroke="#2a6ae0"/><rect x="1" y="1" width="14" height="2" fill="#4a8af4"/><path d="M10.8 4.6c-0.6-0.5-1.6-0.4-2 0.6L6.6 13.4c-0.3 0.9-1 1.1-1.7 0.8" fill="none" stroke="#141414" stroke-width="1.1"/><path d="M6 8h4.2" stroke="#141414" stroke-width="1"/></svg>
<div class="a m" style="left:27px;top:229px;font-size:12.5px;line-height:1;color:#eeeeee;"><span class="sx" style="transform:scaleX(0.9333)">sub_7FF67D14B2C0</span></div>
<svg class="a" style="left:5px;top:242px;" width="16" height="16" viewBox="0 0 16 16"><rect x="0.5" y="0.5" width="15" height="15" fill="#eafaff" stroke="#2a6ae0"/><rect x="1" y="1" width="14" height="2" fill="#4a8af4"/><path d="M10.8 4.6c-0.6-0.5-1.6-0.4-2 0.6L6.6 13.4c-0.3 0.9-1 1.1-1.7 0.8" fill="none" stroke="#141414" stroke-width="1.1"/><path d="M6 8h4.2" stroke="#141414" stroke-width="1"/></svg>
<div class="a m" style="left:27px;top:246px;font-size:12.5px;line-height:1;color:#eeeeee;"><span class="sx" style="transform:scaleX(0.9333)">sub_7FF67D14B300</span></div>
<svg class="a" style="left:5px;top:259px;" width="16" height="16" viewBox="0 0 16 16"><rect x="0.5" y="0.5" width="15" height="15" fill="#eafaff" stroke="#2a6ae0"/><rect x="1" y="1" width="14" height="2" fill="#4a8af4"/><path d="M10.8 4.6c-0.6-0.5-1.6-0.4-2 0.6L6.6 13.4c-0.3 0.9-1 1.1-1.7 0.8" fill="none" stroke="#141414" stroke-width="1.1"/><path d="M6 8h4.2" stroke="#141414" stroke-width="1"/></svg>
<div class="a m" style="left:27px;top:263px;font-size:12.5px;line-height:1;color:#eeeeee;"><span class="sx" style="transform:scaleX(0.9333)">sub_7FF67D14B340</span></div>
<svg class="a" style="left:5px;top:276px;" width="16" height="16" viewBox="0 0 16 16"><rect x="0.5" y="0.5" width="15" height="15" fill="#eafaff" stroke="#2a6ae0"/><rect x="1" y="1" width="14" height="2" fill="#4a8af4"/><path d="M10.8 4.6c-0.6-0.5-1.6-0.4-2 0.6L6.6 13.4c-0.3 0.9-1 1.1-1.7 0.8" fill="none" stroke="#141414" stroke-width="1.1"/><path d="M6 8h4.2" stroke="#141414" stroke-width="1"/></svg>
<div class="a m" style="left:27px;top:280px;font-size:12.5px;line-height:1;color:#eeeeee;"><span class="sx" style="transform:scaleX(0.9333)">sub_7FF67D14B3A0</span></div>
<svg class="a" style="left:5px;top:293px;" width="16" height="16" viewBox="0 0 16 16"><rect x="0.5" y="0.5" width="15" height="15" fill="#eafaff" stroke="#2a6ae0"/><rect x="1" y="1" width="14" height="2" fill="#4a8af4"/><path d="M10.8 4.6c-0.6-0.5-1.6-0.4-2 0.6L6.6 13.4c-0.3 0.9-1 1.1-1.7 0.8" fill="none" stroke="#141414" stroke-width="1.1"/><path d="M6 8h4.2" stroke="#141414" stroke-width="1"/></svg>
<div class="a m" style="left:27px;top:297px;font-size:12.5px;line-height:1;color:#eeeeee;"><span class="sx" style="transform:scaleX(0.9333)">sub_7FF67D14B400</span></div>
<svg class="a" style="left:5px;top:310px;" width="16" height="16" viewBox="0 0 16 16"><rect x="0.5" y="0.5" width="15" height="15" fill="#eafaff" stroke="#2a6ae0"/><rect x="1" y="1" width="14" height="2" fill="#4a8af4"/><path d="M10.8 4.6c-0.6-0.5-1.6-0.4-2 0.6L6.6 13.4c-0.3 0.9-1 1.1-1.7 0.8" fill="none" stroke="#141414" stroke-width="1.1"/><path d="M6 8h4.2" stroke="#141414" stroke-width="1"/></svg>
<div class="a m" style="left:27px;top:314px;font-size:12.5px;line-height:1;color:#eeeeee;"><span class="sx" style="transform:scaleX(0.9333)">sub_7FF67D14B460</span></div>
<svg class="a" style="left:5px;top:327px;" width="16" height="16" viewBox="0 0 16 16"><rect x="0.5" y="0.5" width="15" height="15" fill="#eafaff" stroke="#2a6ae0"/><rect x="1" y="1" width="14" height="2" fill="#4a8af4"/><path d="M10.8 4.6c-0.6-0.5-1.6-0.4-2 0.6L6.6 13.4c-0.3 0.9-1 1.1-1.7 0.8" fill="none" stroke="#141414" stroke-width="1.1"/><path d="M6 8h4.2" stroke="#141414" stroke-width="1"/></svg>
<div class="a m" style="left:27px;top:331px;font-size:12.5px;line-height:1;color:#eeeeee;"><span class="sx" style="transform:scaleX(0.9333)">sub_7FF67D14B4D0</span></div>
<svg class="a" style="left:5px;top:344px;" width="16" height="16" viewBox="0 0 16 16"><rect x="0.5" y="0.5" width="15" height="15" fill="#eafaff" stroke="#2a6ae0"/><rect x="1" y="1" width="14" height="2" fill="#4a8af4"/><path d="M10.8 4.6c-0.6-0.5-1.6-0.4-2 0.6L6.6 13.4c-0.3 0.9-1 1.1-1.7 0.8" fill="none" stroke="#141414" stroke-width="1.1"/><path d="M6 8h4.2" stroke="#141414" stroke-width="1"/></svg>
<div class="a m" style="left:27px;top:348px;font-size:12.5px;line-height:1;color:#eeeeee;"><span class="sx" style="transform:scaleX(0.9333)">Base64Encode_14001B600</span></div>
<svg class="a" style="left:5px;top:361px;" width="16" height="16" viewBox="0 0 16 16"><rect x="0.5" y="0.5" width="15" height="15" fill="#eafaff" stroke="#2a6ae0"/><rect x="1" y="1" width="14" height="2" fill="#4a8af4"/><path d="M10.8 4.6c-0.6-0.5-1.6-0.4-2 0.6L6.6 13.4c-0.3 0.9-1 1.1-1.7 0.8" fill="none" stroke="#141414" stroke-width="1.1"/><path d="M6 8h4.2" stroke="#141414" stroke-width="1"/></svg>
<div class="a m" style="left:27px;top:365px;font-size:12.5px;line-height:1;color:#eeeeee;"><span class="sx" style="transform:scaleX(0.9333)">sub_7FF67D14B930</span></div>
<svg class="a" style="left:5px;top:378px;" width="16" height="16" viewBox="0 0 16 16"><rect x="0.5" y="0.5" width="15" height="15" fill="#eafaff" stroke="#2a6ae0"/><rect x="1" y="1" width="14" height="2" fill="#4a8af4"/><path d="M10.8 4.6c-0.6-0.5-1.6-0.4-2 0.6L6.6 13.4c-0.3 0.9-1 1.1-1.7 0.8" fill="none" stroke="#141414" stroke-width="1.1"/><path d="M6 8h4.2" stroke="#141414" stroke-width="1"/></svg>
<div class="a m" style="left:27px;top:382px;font-size:12.5px;line-height:1;color:#eeeeee;"><span class="sx" style="transform:scaleX(0.9333)">sub_7FF67D14B980</span></div>
<svg class="a" style="left:5px;top:395px;" width="16" height="16" viewBox="0 0 16 16"><rect x="0.5" y="0.5" width="15" height="15" fill="#eafaff" stroke="#2a6ae0"/><rect x="1" y="1" width="14" height="2" fill="#4a8af4"/><path d="M10.8 4.6c-0.6-0.5-1.6-0.4-2 0.6L6.6 13.4c-0.3 0.9-1 1.1-1.7 0.8" fill="none" stroke="#141414" stroke-width="1.1"/><path d="M6 8h4.2" stroke="#141414" stroke-width="1"/></svg>
<div class="a m" style="left:27px;top:399px;font-size:12.5px;line-height:1;color:#eeeeee;"><span class="sx" style="transform:scaleX(0.9333)">sub_7FF67D14B9F0</span></div>
<svg class="a" style="left:5px;top:412px;" width="16" height="16" viewBox="0 0 16 16"><rect x="0.5" y="0.5" width="15" height="15" fill="#eafaff" stroke="#2a6ae0"/><rect x="1" y="1" width="14" height="2" fill="#4a8af4"/><path d="M10.8 4.6c-0.6-0.5-1.6-0.4-2 0.6L6.6 13.4c-0.3 0.9-1 1.1-1.7 0.8" fill="none" stroke="#141414" stroke-width="1.1"/><path d="M6 8h4.2" stroke="#141414" stroke-width="1"/></svg>
<div class="a m" style="left:27px;top:416px;font-size:12.5px;line-height:1;color:#eeeeee;"><span class="sx" style="transform:scaleX(0.9333)">sub_7FF67D14BA40</span></div>
<svg class="a" style="left:5px;top:429px;" width="16" height="16" viewBox="0 0 16 16"><rect x="0.5" y="0.5" width="15" height="15" fill="#eafaff" stroke="#2a6ae0"/><rect x="1" y="1" width="14" height="2" fill="#4a8af4"/><path d="M10.8 4.6c-0.6-0.5-1.6-0.4-2 0.6L6.6 13.4c-0.3 0.9-1 1.1-1.7 0.8" fill="none" stroke="#141414" stroke-width="1.1"/><path d="M6 8h4.2" stroke="#141414" stroke-width="1"/></svg>
<div class="a m" style="left:27px;top:433px;font-size:12.5px;line-height:1;color:#eeeeee;"><span class="sx" style="transform:scaleX(0.9333)">sub_7FF67D14BAA0</span></div>
<svg class="a" style="left:5px;top:446px;" width="16" height="16" viewBox="0 0 16 16"><rect x="0.5" y="0.5" width="15" height="15" fill="#eafaff" stroke="#2a6ae0"/><rect x="1" y="1" width="14" height="2" fill="#4a8af4"/><path d="M10.8 4.6c-0.6-0.5-1.6-0.4-2 0.6L6.6 13.4c-0.3 0.9-1 1.1-1.7 0.8" fill="none" stroke="#141414" stroke-width="1.1"/><path d="M6 8h4.2" stroke="#141414" stroke-width="1"/></svg>
<div class="a m" style="left:27px;top:450px;font-size:12.5px;line-height:1;color:#eeeeee;"><span class="sx" style="transform:scaleX(0.9333)">sub_7FF67D14BB00</span></div>
<svg class="a" style="left:5px;top:463px;" width="16" height="16" viewBox="0 0 16 16"><rect x="0.5" y="0.5" width="15" height="15" fill="#eafaff" stroke="#2a6ae0"/><rect x="1" y="1" width="14" height="2" fill="#4a8af4"/><path d="M10.8 4.6c-0.6-0.5-1.6-0.4-2 0.6L6.6 13.4c-0.3 0.9-1 1.1-1.7 0.8" fill="none" stroke="#141414" stroke-width="1.1"/><path d="M6 8h4.2" stroke="#141414" stroke-width="1"/></svg>
<div class="a m" style="left:27px;top:467px;font-size:12.5px;line-height:1;color:#eeeeee;"><span class="sx" style="transform:scaleX(0.9333)">To128_7FF67D14BC50</span></div>
<svg class="a" style="left:5px;top:480px;" width="16" height="16" viewBox="0 0 16 16"><rect x="0.5" y="0.5" width="15" height="15" fill="#eafaff" stroke="#2a6ae0"/><rect x="1" y="1" width="14" height="2" fill="#4a8af4"/><path d="M10.8 4.6c-0.6-0.5-1.6-0.4-2 0.6L6.6 13.4c-0.3 0.9-1 1.1-1.7 0.8" fill="none" stroke="#141414" stroke-width="1.1"/><path d="M6 8h4.2" stroke="#141414" stroke-width="1"/></svg>
<div class="a m" style="left:27px;top:484px;font-size:12.5px;line-height:1;color:#eeeeee;"><span class="sx" style="transform:scaleX(0.9333)">sub_7FF67D14BE40</span></div>
<svg class="a" style="left:5px;top:497px;" width="16" height="16" viewBox="0 0 16 16"><rect x="0.5" y="0.5" width="15" height="15" fill="#eafaff" stroke="#2a6ae0"/><rect x="1" y="1" width="14" height="2" fill="#4a8af4"/><path d="M10.8 4.6c-0.6-0.5-1.6-0.4-2 0.6L6.6 13.4c-0.3 0.9-1 1.1-1.7 0.8" fill="none" stroke="#141414" stroke-width="1.1"/><path d="M6 8h4.2" stroke="#141414" stroke-width="1"/></svg>
<div class="a m" style="left:27px;top:501px;font-size:12.5px;line-height:1;color:#eeeeee;"><span class="sx" style="transform:scaleX(0.9333)">sub_7FF67D14BE80</span></div>
<svg class="a" style="left:5px;top:514px;" width="16" height="16" viewBox="0 0 16 16"><rect x="0.5" y="0.5" width="15" height="15" fill="#eafaff" stroke="#2a6ae0"/><rect x="1" y="1" width="14" height="2" fill="#4a8af4"/><path d="M10.8 4.6c-0.6-0.5-1.6-0.4-2 0.6L6.6 13.4c-0.3 0.9-1 1.1-1.7 0.8" fill="none" stroke="#141414" stroke-width="1.1"/><path d="M6 8h4.2" stroke="#141414" stroke-width="1"/></svg>
<div class="a m" style="left:27px;top:518px;font-size:12.5px;line-height:1;color:#eeeeee;"><span class="sx" style="transform:scaleX(0.9333)">sub_7FF67D14BF00</span></div>
<svg class="a" style="left:5px;top:531px;" width="16" height="16" viewBox="0 0 16 16"><rect x="0.5" y="0.5" width="15" height="15" fill="#eafaff" stroke="#2a6ae0"/><rect x="1" y="1" width="14" height="2" fill="#4a8af4"/><path d="M10.8 4.6c-0.6-0.5-1.6-0.4-2 0.6L6.6 13.4c-0.3 0.9-1 1.1-1.7 0.8" fill="none" stroke="#141414" stroke-width="1.1"/><path d="M6 8h4.2" stroke="#141414" stroke-width="1"/></svg>
<div class="a m" style="left:27px;top:535px;font-size:12.5px;line-height:1;color:#eeeeee;"><span class="sx" style="transform:scaleX(0.9333)">sub_7FF67D14BF70</span></div>
<svg class="a" style="left:5px;top:548px;" width="16" height="16" viewBox="0 0 16 16"><rect x="0.5" y="0.5" width="15" height="15" fill="#eafaff" stroke="#2a6ae0"/><rect x="1" y="1" width="14" height="2" fill="#4a8af4"/><path d="M10.8 4.6c-0.6-0.5-1.6-0.4-2 0.6L6.6 13.4c-0.3 0.9-1 1.1-1.7 0.8" fill="none" stroke="#141414" stroke-width="1.1"/><path d="M6 8h4.2" stroke="#141414" stroke-width="1"/></svg>
<div class="a m" style="left:27px;top:552px;font-size:12.5px;line-height:1;color:#eeeeee;"><span class="sx" style="transform:scaleX(0.9333)">sub_7FF67D14BFF0</span></div>
<svg class="a" style="left:5px;top:565px;" width="16" height="16" viewBox="0 0 16 16"><rect x="0.5" y="0.5" width="15" height="15" fill="#eafaff" stroke="#2a6ae0"/><rect x="1" y="1" width="14" height="2" fill="#4a8af4"/><path d="M10.8 4.6c-0.6-0.5-1.6-0.4-2 0.6L6.6 13.4c-0.3 0.9-1 1.1-1.7 0.8" fill="none" stroke="#141414" stroke-width="1.1"/><path d="M6 8h4.2" stroke="#141414" stroke-width="1"/></svg>
<div class="a m" style="left:27px;top:569px;font-size:12.5px;line-height:1;color:#eeeeee;"><span class="sx" style="transform:scaleX(0.9333)">sub_7FF67D14C040</span></div>
<div class="a" style="left:5px;top:582px;width:16px;height:5px;overflow:hidden">
<div style="width:16px;height:16px;border:1px solid #2a6ae0;border-top:3px solid #3a7ef0;background:#f0fbff"></div></div>
<div class="a" style="left:5px;top:590px;width:30px;height:14px;background:#65688a;border-radius:7px"></div>
<div class="a" style="left:236px;top:404px;width:14px;height:20px;background:#63678a;border-radius:7px"></div>
<div class="a s" style="left:7px;top:613.7px;font-size:12.5px;line-height:13px;color:#f0f0f0;letter-spacing:0.2px">Line 514 of 768</div>
<svg class="a" style="left:5px;top:640px;" width="16" height="14" viewBox="0 0 16 14"><g fill="#2a6ef0"><rect x="5" y="0" width="5" height="4"/><rect x="2" y="5" width="4" height="4"/><rect x="9" y="5" width="4" height="4"/><rect x="0" y="10" width="3" height="4"/><rect x="4.2" y="10" width="2.6" height="4"/><rect x="8" y="10" width="3" height="4"/><rect x="12.3" y="10" width="2.8" height="4"/></g></svg>
<div class="a m" style="left:26px;top:642px;font-size:12.5px;line-height:1;color:#f8f8f4;"><span class="sx" style="transform:scaleX(0.8000)">Graph overview</span></div>
<div class="a" style="left:153px;top:645px;width:11px;height:10px;border:1px solid #353536;border-top-width:2px"></div>
<div class="a" style="left:193px;top:647px;width:8px;height:7px;border:1px solid #353536"></div>
<div class="a" style="left:195px;top:645px;width:8px;height:7px;border:1px solid #353536"></div>
<svg class="a" style="left:230px;top:645px;" width="10" height="10" viewBox="0 0 10 10"><path d="M1 1L9 9M9 1L1 9" stroke="#353536" stroke-width="1.5"/></svg>
<div class="a" style="left:1px;top:657px;width:253px;height:107px;background:linear-gradient(#2a2c38,#1f2029)"></div>
<div class="a" style="left:52px;top:666px;width:152px;height:80px;border:1px dotted #e8e8e8;border-top:none"></div>
<div class="a" style="left:93px;top:665px;width:40px;height:75px;border:1px solid #0a0a0a;background:#282a36"></div>
<div class="a" style="left:134px;top:665px;width:26px;height:13px;border:1px solid #0a0a0a;background:#282a36"></div>
<div class="a" style="left:114px;top:745px;width:26px;height:18px;border:1px solid #0a0a0a;background:#282a36"></div>
<div class="a" style="left:146px;top:678px;width:1px;height:62px;background:#2aa0c0;"></div>
<div class="a" style="left:112px;top:740px;width:35px;height:1px;background:#2aa0c0;"></div>
<div class="a" style="left:258px;top:102px;width:1160px;height:662px;border:1px solid #dcdcdc"></div>
<div class="a" style="left:259px;top:103px;width:1158px;height:641px;background:linear-gradient(#2b2d39,#1e1f28)"></div>
<div class="a" style="left:259px;top:744px;width:1158px;height:19px;background:#282a36;"></div>
<div class="a" style="left:575px;top:122px;width:300px;height:568px;background:#282a36;border:1px solid #000"></div>
<div class="a" style="left:575px;top:122px;width:300px;height:17px;background:#f6f6f0;border:1px solid #000"></div>
<svg class="a" style="left:577px;top:124px;" width="13" height="13" viewBox="0 0 13 13"><defs><linearGradient id="hue" x1="0" x2="1"><stop offset="0" stop-color="#ff4"/><stop offset="0.25" stop-color="#2f2"/><stop offset="0.5" stop-color="#2ff"/><stop offset="0.75" stop-color="#22f"/><stop offset="1" stop-color="#f2f"/></linearGradient><linearGradient id="dk" x1="0" y1="0" x2="0" y2="1"><stop offset="0" stop-color="#fff" stop-opacity="0.5"/><stop offset="0.5" stop-color="#fff" stop-opacity="0"/><stop offset="1" stop-color="#000" stop-opacity="0.9"/></linearGradient></defs><rect x="0" y="0" width="13" height="13" fill="#000066"/><rect x="1.5" y="1.5" width="10" height="10" fill="url(#hue)"/><rect x="1.5" y="1.5" width="10" height="10" fill="url(#dk)"/></svg>
<svg class="a" style="left:593px;top:124px;" width="13" height="13" viewBox="0 0 13 13"><path d="M0.5 5.5V12.5H12.5V5.5" fill="none" stroke="#101a90" stroke-width="1"/><rect x="1.5" y="6" width="10.5" height="6" fill="#2a3ac8"/><path d="M2.5 11L10.5 2.5l1.5 1.5-8 8.5H2.5z" fill="#f4b020" stroke="#a06010" stroke-width="0.4"/><path d="M10.5 2.5L11.8 1l1.5 1.5-1.3 1.5z" fill="#60a8e0"/></svg>
<svg class="a" style="left:609px;top:124px;" width="13" height="13" viewBox="0 0 13 13"><rect x="0.5" y="0.5" width="12" height="12" fill="#fafcff" stroke="#5aa0e8"/><rect x="0.5" y="0.5" width="12" height="1.5" fill="#3aa0f0"/><rect x="6" y="3" width="1" height="3" fill="#2020e0"/><rect x="8" y="3.5" width="1" height="1" fill="#2020e0"/><rect x="10" y="3" width="1" height="3" fill="#2020e0"/><path d="M3 6.5l2.5 2-2.5 2" fill="none" stroke="#2020e0" stroke-width="1"/><rect x="5" y="8" width="6" height="1.6" fill="#a01060"/></svg>
<div class="a m" style="left:577px;top:170.1px;font-size:11.5px;line-height:14px"><span class="sx" style="transform:scaleX(0.9275)"><span style="color:#6a7eba">; Attributes: bp-based frame fpd=0C10h</span></span></div>
<div class="a m" style="left:577px;top:198.9px;font-size:11.5px;line-height:14px"><span class="sx" style="transform:scaleX(0.9275)"><span style="color:#6a7eba">; __int64 __fastcall sub_7FF67D14C040(__int64)</span></span></div>
<div class="a m" style="left:577px;top:213.3px;font-size:11.5px;line-height:14px"><span class="sx" style="transform:scaleX(0.9275)"><span style="color:#ecc21c">sub_7FF67D14C040 proc near</span></span></div>
<div class="a m" style="left:577px;top:242.1px;font-size:11.5px;line-height:14px"><span class="sx" style="transform:scaleX(0.9275)"><span style="color:#ee8e1c">var_840</span><span style="color:#e6e6e6">= byte ptr </span><span style="color:#e6583a">-840h</span></span></div>
<div class="a m" style="left:577px;top:256.5px;font-size:11.5px;line-height:14px"><span class="sx" style="transform:scaleX(0.9275)"><span style="color:#ee8e1c">arg_0</span><span style="color:#e6e6e6">= qword ptr  </span><span style="color:#e6583a">10h</span></span></div>
<div class="a m" style="left:577px;top:285.3px;font-size:11.5px;line-height:14px"><span class="sx" style="transform:scaleX(0.9275)"><span style="color:#a4acbe">; __unwind { // </span><span style="color:#ecc21c">j___C_specific_handler</span></span></div>
<div class="a m" style="left:577px;top:299.7px;font-size:11.5px;line-height:14px"><span class="sx" style="transform:scaleX(0.9275)"><span style="color:#e4e4e4">mov     </span><span style="color:#c8d6e4">[</span><span style="color:#7cc6ee">rsp</span><span style="color:#e6e6e6">-</span><span style="color:#e6583a">8</span><span style="color:#e6e6e6">+</span><span style="color:#ee8e1c">arg_0</span><span style="color:#c8d6e4">]</span><span style="color:#e6e6e6">, </span><span style="color:#7cc6ee">rcx</span></span></div>
<div class="a m" style="left:577px;top:314.1px;font-size:11.5px;line-height:14px"><span class="sx" style="transform:scaleX(0.9275)"><span style="color:#e4e4e4">push    </span><span style="color:#7cc6ee">rbp</span></span></div>
<div class="a m" style="left:577px;top:328.5px;font-size:11.5px;line-height:14px"><span class="sx" style="transform:scaleX(0.9275)"><span style="color:#e4e4e4">push    </span><span style="color:#7cc6ee">rdi</span></span></div>
<div class="a m" style="left:577px;top:342.9px;font-size:11.5px;line-height:14px"><span class="sx" style="transform:scaleX(0.9275)"><span style="color:#e4e4e4">sub     </span><span style="color:#7cc6ee">rsp</span><span style="color:#e6e6e6">, </span><span style="color:#e6583a">0C28h</span></span></div>
<div class="a m" style="left:577px;top:357.3px;font-size:11.5px;line-height:14px"><span class="sx" style="transform:scaleX(0.9275)"><span style="color:#e4e4e4">lea     </span><span style="color:#7cc6ee">rbp</span><span style="color:#e6e6e6">, </span><span style="color:#c8d6e4">[</span><span style="color:#7cc6ee">rsp</span><span style="color:#e6e6e6">+</span><span style="color:#e6583a">20h</span><span style="color:#c8d6e4">]</span></span></div>
<div class="a m" style="left:577px;top:371.7px;font-size:11.5px;line-height:14px"><span class="sx" style="transform:scaleX(0.9275)"><span style="color:#e4e4e4">lea     </span><span style="color:#7cc6ee">rcx</span><span style="color:#e6e6e6">, </span><span style="color:#88d612">unk_7FF67D1660F2</span></span></div>
<div class="a m" style="left:577px;top:386.1px;font-size:11.5px;line-height:14px"><span class="sx" style="transform:scaleX(0.9275)"><span style="color:#e4e4e4">call    </span><span style="color:#ecc21c">sub_7FF67D1417EE</span></span></div>
<div class="a m" style="left:577px;top:400.5px;font-size:11.5px;line-height:14px"><span class="sx" style="transform:scaleX(0.9275)"><span style="color:#e4e4e4">nop     </span></span></div>
<div class="a m" style="left:577px;top:414.9px;font-size:11.5px;line-height:14px"><span class="sx" style="transform:scaleX(0.9275)"><span style="color:#e4e4e4">mov     </span><span style="color:#7cc6ee">r8d</span><span style="color:#e6e6e6">, </span><span style="color:#e6583a">1Ah</span></span></div>
<div class="a m" style="left:577px;top:429.3px;font-size:11.5px;line-height:14px"><span class="sx" style="transform:scaleX(0.9275)"><span style="color:#e4e4e4">xor     </span><span style="color:#7cc6ee">edx</span><span style="color:#e6e6e6">, </span><span style="color:#7cc6ee">edx</span></span></div>
<div class="a m" style="left:577px;top:443.7px;font-size:11.5px;line-height:14px"><span class="sx" style="transform:scaleX(0.9275)"><span style="color:#e4e4e4">lea     </span><span style="color:#7cc6ee">rcx</span><span style="color:#e6e6e6">, </span><span style="color:#88d612">unk_7FF67D15F8A0</span></span></div>
<div class="a m" style="left:577px;top:458.1px;font-size:11.5px;line-height:14px"><span class="sx" style="transform:scaleX(0.9275)"><span style="color:#e4e4e4">call    </span><span style="color:#ecc21c">sub_7FF67D1410B4</span></span></div>
<div class="a m" style="left:577px;top:472.5px;font-size:11.5px;line-height:14px"><span class="sx" style="transform:scaleX(0.9275)"><span style="color:#e4e4e4">mov     </span><span style="color:#7cc6ee">eax</span><span style="color:#e6e6e6">, </span><span style="color:#e6583a">4</span></span></div>
<div class="a m" style="left:577px;top:486.9px;font-size:11.5px;line-height:14px"><span class="sx" style="transform:scaleX(0.9275)"><span style="color:#e4e4e4">imul    </span><span style="color:#7cc6ee">rax</span><span style="color:#e6e6e6">, </span><span style="color:#e6583a">0</span></span></div>
<div class="a m" style="left:577px;top:501.3px;font-size:11.5px;line-height:14px"><span class="sx" style="transform:scaleX(0.9275)"><span style="color:#e4e4e4">lea     </span><span style="color:#7cc6ee">rcx</span><span style="color:#e6e6e6">, </span><span style="color:#88d612">unk_7FF67D15F8A0</span></span></div>
<div class="a m" style="left:577px;top:515.7px;font-size:11.5px;line-height:14px"><span class="sx" style="transform:scaleX(0.9275)"><span style="color:#e4e4e4">add     </span><span style="color:#7cc6ee">rcx</span><span style="color:#e6e6e6">, </span><span style="color:#7cc6ee">rax</span></span></div>
<div class="a m" style="left:577px;top:530.1px;font-size:11.5px;line-height:14px"><span class="sx" style="transform:scaleX(0.9275)"><span style="color:#e4e4e4">mov     </span><span style="color:#7cc6ee">rax</span><span style="color:#e6e6e6">, </span><span style="color:#7cc6ee">rcx</span></span></div>
<div class="a m" style="left:577px;top:544.5px;font-size:11.5px;line-height:14px"><span class="sx" style="transform:scaleX(0.9275)"><span style="color:#e4e4e4">mov     </span><span style="color:#7cc6ee">rcx</span><span style="color:#e6e6e6">, </span><span style="color:#c8d6e4">[</span><span style="color:#7cc6ee">rbp</span><span style="color:#e6e6e6">+</span><span style="color:#e6583a">0C10h</span><span style="color:#e6e6e6">+</span><span style="color:#ee8e1c">arg_0</span><span style="color:#c8d6e4">]</span></span></div>
<div class="a m" style="left:577px;top:558.9px;font-size:11.5px;line-height:14px"><span class="sx" style="transform:scaleX(0.9275)"><span style="color:#e4e4e4">add     </span><span style="color:#7cc6ee">rcx</span><span style="color:#e6e6e6">, </span><span style="color:#e6583a">8</span></span></div>
<div class="a m" style="left:577px;top:573.3px;font-size:11.5px;line-height:14px"><span class="sx" style="transform:scaleX(0.9275)"><span style="color:#e4e4e4">mov     </span><span style="color:#7cc6ee">r8</span><span style="color:#e6e6e6">, </span><span style="color:#7cc6ee">rax</span></span></div>
<div class="a m" style="left:577px;top:587.7px;font-size:11.5px;line-height:14px"><span class="sx" style="transform:scaleX(0.9275)"><span style="color:#e4e4e4">lea     </span><span style="color:#7cc6ee">rdx</span><span style="color:#e6e6e6">, </span><span style="color:#c8d6e4">[</span><span style="color:#7cc6ee">rbp</span><span style="color:#e6e6e6">+</span><span style="color:#e6583a">0C10h</span><span style="color:#e6e6e6">+</span><span style="color:#ee8e1c">var_840</span><span style="color:#c8d6e4">]</span></span></div>
<div class="a m" style="left:577px;top:602.1px;font-size:11.5px;line-height:14px"><span class="sx" style="transform:scaleX(0.9275)"><span style="color:#e4e4e4">call    </span><span style="color:#ecc21c">sub_7FF67D1412C6</span></span></div>
<div class="a m" style="left:577px;top:616.5px;font-size:11.5px;line-height:14px"><span class="sx" style="transform:scaleX(0.9275)"><span style="color:#e4e4e4">mov     </span><span style="color:#7cc6ee">rcx</span><span style="color:#e6e6e6">, </span><span style="color:#c8d6e4">[</span><span style="color:#7cc6ee">rbp</span><span style="color:#e6e6e6">+</span><span style="color:#e6583a">0C10h</span><span style="color:#e6e6e6">+</span><span style="color:#ee8e1c">arg_0</span><span style="color:#c8d6e4">]</span></span></div>
<div class="a m" style="left:577px;top:630.9px;font-size:11.5px;line-height:14px"><span class="sx" style="transform:scaleX(0.9275)"><span style="color:#e4e4e4">add     </span><span style="color:#7cc6ee">rcx</span><span style="color:#e6e6e6">, </span><span style="color:#e6583a">8</span></span></div>
<div class="a m" style="left:577px;top:645.3px;font-size:11.5px;line-height:14px"><span class="sx" style="transform:scaleX(0.9275)"><span style="color:#e4e4e4">mov     </span><span style="color:#7cc6ee">rdx</span><span style="color:#e6e6e6">, </span><span style="color:#7cc6ee">rax</span></span></div>
<div class="a m" style="left:577px;top:659.7px;font-size:11.5px;line-height:14px"><span class="sx" style="transform:scaleX(0.9275)"><span style="color:#e4e4e4">call    </span><span style="color:#ecc21c">COPY_7FF67D1410A0</span></span></div>
<div class="a m" style="left:577px;top:674.1px;font-size:11.5px;line-height:14px"><span class="sx" style="transform:scaleX(0.9275)"><span style="color:#e4e4e4">jmp     </span><span style="color:#e4e4e4">short </span><span style="color:#ecc21c">loc_7FF67D14C0CF</span></span></div>
<div class="a" style="left:882px;top:122px;width:197px;height:93px;background:#282a36;border:1px solid #000"></div>
<div class="a" style="left:882px;top:122px;width:197px;height:17px;background:#f6f6f0;border:1px solid #000"></div>
<svg class="a" style="left:884px;top:124px;" width="13" height="13" viewBox="0 0 13 13"><defs><linearGradient id="hue" x1="0" x2="1"><stop offset="0" stop-color="#ff4"/><stop offset="0.25" stop-color="#2f2"/><stop offset="0.5" stop-color="#2ff"/><stop offset="0.75" stop-color="#22f"/><stop offset="1" stop-color="#f2f"/></linearGradient><linearGradient id="dk" x1="0" y1="0" x2="0" y2="1"><stop offset="0" stop-color="#fff" stop-opacity="0.5"/><stop offset="0.5" stop-color="#fff" stop-opacity="0"/><stop offset="1" stop-color="#000" stop-opacity="0.9"/></linearGradient></defs><rect x="0" y="0" width="13" height="13" fill="#000066"/><rect x="1.5" y="1.5" width="10" height="10" fill="url(#hue)"/><rect x="1.5" y="1.5" width="10" height="10" fill="url(#dk)"/></svg>
<svg class="a" style="left:900px;top:124px;" width="13" height="13" viewBox="0 0 13 13"><path d="M0.5 5.5V12.5H12.5V5.5" fill="none" stroke="#101a90" stroke-width="1"/><rect x="1.5" y="6" width="10.5" height="6" fill="#2a3ac8"/><path d="M2.5 11L10.5 2.5l1.5 1.5-8 8.5H2.5z" fill="#f4b020" stroke="#a06010" stroke-width="0.4"/><path d="M10.5 2.5L11.8 1l1.5 1.5-1.3 1.5z" fill="#60a8e0"/></svg>
<svg class="a" style="left:916px;top:124px;" width="13" height="13" viewBox="0 0 13 13"><rect x="0.5" y="0.5" width="12" height="12" fill="#fafcff" stroke="#5aa0e8"/><rect x="0.5" y="0.5" width="12" height="1.5" fill="#3aa0f0"/><rect x="6" y="3" width="1" height="3" fill="#2020e0"/><rect x="8" y="3.5" width="1" height="1" fill="#2020e0"/><rect x="10" y="3" width="1" height="3" fill="#2020e0"/><path d="M3 6.5l2.5 2-2.5 2" fill="none" stroke="#2020e0" stroke-width="1"/><rect x="5" y="8" width="6" height="1.6" fill="#a01060"/></svg>
<div class="a" style="left:884px;top:140px;width:193px;height:14.5px;background:#dc3a3a;"></div>
<div class="a m" style="left:884px;top:141.3px;font-size:11.5px;line-height:14px"><span class="sx" style="transform:scaleX(0.9275)"><span style="color:#f4e8e8">lea     </span><span style="color:#d0d8e8">r8</span><span style="color:#f0f0f0">, </span><span style="color:#f8b418">sub_7FF67D14187F</span></span></div>
<div class="a m" style="left:884px;top:155.7px;font-size:11.5px;line-height:14px"><span class="sx" style="transform:scaleX(0.9275)"><span style="color:#e4e4e4">xor     </span><span style="color:#7cc6ee">edx</span><span style="color:#e6e6e6">, </span><span style="color:#7cc6ee">edx</span></span></div>
<div class="a m" style="left:884px;top:170.1px;font-size:11.5px;line-height:14px"><span class="sx" style="transform:scaleX(0.9275)"><span style="color:#e4e4e4">mov     </span><span style="color:#7cc6ee">rcx</span><span style="color:#e6e6e6">, </span><span style="color:#c8d6e4">[</span><span style="color:#7cc6ee">rbp</span><span style="color:#e6e6e6">+</span><span style="color:#e6583a">0C10h</span><span style="color:#e6e6e6">+</span><span style="color:#ee8e1c">arg_0</span><span style="color:#c8d6e4">]</span></span></div>
<div class="a m" style="left:884px;top:184.5px;font-size:11.5px;line-height:14px"><span class="sx" style="transform:scaleX(0.9275)"><span style="color:#e4e4e4">call    </span><span style="color:#ecc21c">sub_7FF67D14182A</span></span></div>
<div class="a m" style="left:884px;top:198.9px;font-size:11.5px;line-height:14px"><span class="sx" style="transform:scaleX(0.9275)"><span style="color:#e4e4e4">nop     </span></span></div>
<div class="a" style="left:259px;top:103px;width:1158px;height:641px;overflow:hidden">
<div class="a" style="left:472px;top:611px;width:191px;height:60px;background:#282a36;border:1px solid #000"></div>
</div>
<div class="a" style="left:731px;top:714px;width:191px;height:17px;background:#f6f6f0;border:1px solid #000"></div>
<svg class="a" style="left:733px;top:716px;" width="13" height="13" viewBox="0 0 13 13"><defs><linearGradient id="hue" x1="0" x2="1"><stop offset="0" stop-color="#ff4"/><stop offset="0.25" stop-color="#2f2"/><stop offset="0.5" stop-color="#2ff"/><stop offset="0.75" stop-color="#22f"/><stop offset="1" stop-color="#f2f"/></linearGradient><linearGradient id="dk" x1="0" y1="0" x2="0" y2="1"><stop offset="0" stop-color="#fff" stop-opacity="0.5"/><stop offset="0.5" stop-color="#fff" stop-opacity="0"/><stop offset="1" stop-color="#000" stop-opacity="0.9"/></linearGradient></defs><rect x="0" y="0" width="13" height="13" fill="#000066"/><rect x="1.5" y="1.5" width="10" height="10" fill="url(#hue)"/><rect x="1.5" y="1.5" width="10" height="10" fill="url(#dk)"/></svg>
<svg class="a" style="left:749px;top:716px;" width="13" height="13" viewBox="0 0 13 13"><path d="M0.5 5.5V12.5H12.5V5.5" fill="none" stroke="#101a90" stroke-width="1"/><rect x="1.5" y="6" width="10.5" height="6" fill="#2a3ac8"/><path d="M2.5 11L10.5 2.5l1.5 1.5-8 8.5H2.5z" fill="#f4b020" stroke="#a06010" stroke-width="0.4"/><path d="M10.5 2.5L11.8 1l1.5 1.5-1.3 1.5z" fill="#60a8e0"/></svg>
<svg class="a" style="left:765px;top:716px;" width="13" height="13" viewBox="0 0 13 13"><rect x="0.5" y="0.5" width="12" height="12" fill="#fafcff" stroke="#5aa0e8"/><rect x="0.5" y="0.5" width="12" height="1.5" fill="#3aa0f0"/><rect x="6" y="3" width="1" height="3" fill="#2020e0"/><rect x="8" y="3.5" width="1" height="1" fill="#2020e0"/><rect x="10" y="3" width="1" height="3" fill="#2020e0"/><path d="M3 6.5l2.5 2-2.5 2" fill="none" stroke="#2020e0" stroke-width="1"/><rect x="5" y="8" width="6" height="1.6" fill="#a01060"/></svg>
<div class="a" style="left:723px;top:690px;width:2px;height:12px;background:#3891aa;"></div>
<div class="a" style="left:723px;top:701px;width:97px;height:2px;background:#3891aa;"></div>
<div class="a" style="left:818px;top:701px;width:2px;height:6px;background:#3891aa;"></div>
<div class="a" style="left:979px;top:215px;width:2px;height:487px;background:#3891aa;"></div>
<div class="a" style="left:834px;top:701px;width:147px;height:2px;background:#3891aa;"></div>
<div class="a" style="left:834px;top:701px;width:2px;height:6px;background:#3891aa;"></div>
<svg class="a" style="left:815px;top:705px;" width="8" height="9" viewBox="0 0 8 9"><path d="M0 0.5h8l-4 8z" fill="#3cc4ec"/></svg>
<svg class="a" style="left:831px;top:705px;" width="8" height="9" viewBox="0 0 8 9"><path d="M0 0.5h8l-4 8z" fill="#3cc4ec"/></svg>
<div class="a" style="left:259.5px;top:745.5px;width:45.5px;height:16.5px;border:1px solid #10a8a8;border-radius:3px"></div>
<div class="a m" style="left:261.5px;top:750.0px;font-size:12px;line-height:1;color:#f8f8f4;"><span class="sx" style="transform:scaleX(0.9722)">80.00%</span></div>
<div class="a" style="left:307.5px;top:745.5px;width:73.5px;height:16.5px;border:1px solid #10a8a8;border-radius:3px"></div>
<div class="a m" style="left:309.5px;top:750.0px;font-size:12px;line-height:1;color:#f8f8f4;"><span class="sx" style="transform:scaleX(0.9722)">(-395,-24)</span></div>
<div class="a" style="left:383.5px;top:745.5px;width:59.5px;height:16.5px;border:1px solid #10a8a8;border-radius:3px"></div>
<div class="a m" style="left:385.5px;top:750.0px;font-size:12px;line-height:1;color:#f8f8f4;"><span class="sx" style="transform:scaleX(0.9722)">(245,28)</span></div>
<div class="a" style="left:445.5px;top:745.5px;width:59.5px;height:16.5px;border:1px solid #10a8a8;border-radius:3px"></div>
<div class="a m" style="left:447.5px;top:750.0px;font-size:12px;line-height:1;color:#f8f8f4;"><span class="sx" style="transform:scaleX(0.9722)">0000B440</span></div>
<div class="a" style="left:507.5px;top:745.5px;width:241.5px;height:16.5px;border:1px solid #10a8a8;border-radius:3px"></div>
<div class="a m" style="left:509.5px;top:750.0px;font-size:12px;line-height:1;color:#f8f8f4;"><span class="sx" style="transform:scaleX(0.9722)">00007FF67D14C040: sub_7FF67D14C040</span></div>
<div class="a" style="left:751.5px;top:745.5px;width:213.5px;height:16.5px;border:1px solid #10a8a8;border-radius:3px"></div>
<div class="a m" style="left:753.5px;top:750.0px;font-size:12px;line-height:1;color:#f8f8f4;"><span class="sx" style="transform:scaleX(0.9722)">(Synchronized with Hex View-1)</span></div>
<div class="a" style="left:1.5px;top:766.5px;width:80px;height:16px;border:1px solid #10a8a8;border-radius:3px"></div>
<div class="a m" style="left:3.5px;top:771.0px;font-size:12px;line-height:1;color:#f8f8f4;"><span class="sx" style="transform:scaleX(0.9722)">AU:  idle</span></div>
<div class="a" style="left:84.5px;top:766.5px;width:73px;height:16px;border:1px solid #10a8a8;border-radius:3px"></div>
<div class="a m" style="left:86.5px;top:771.0px;font-size:12px;line-height:1;color:#f8f8f4;"><span class="sx" style="transform:scaleX(0.9722)">Down</span></div>
<div class="a" style="left:160.5px;top:766.5px;width:80px;height:16px;border:1px solid #10a8a8;border-radius:3px"></div>
<div class="a m" style="left:162.5px;top:771.0px;font-size:12px;line-height:1;color:#f8f8f4;"><span class="sx" style="transform:scaleX(0.9722)">Disk: 356GB</span></div>
</body></html>
